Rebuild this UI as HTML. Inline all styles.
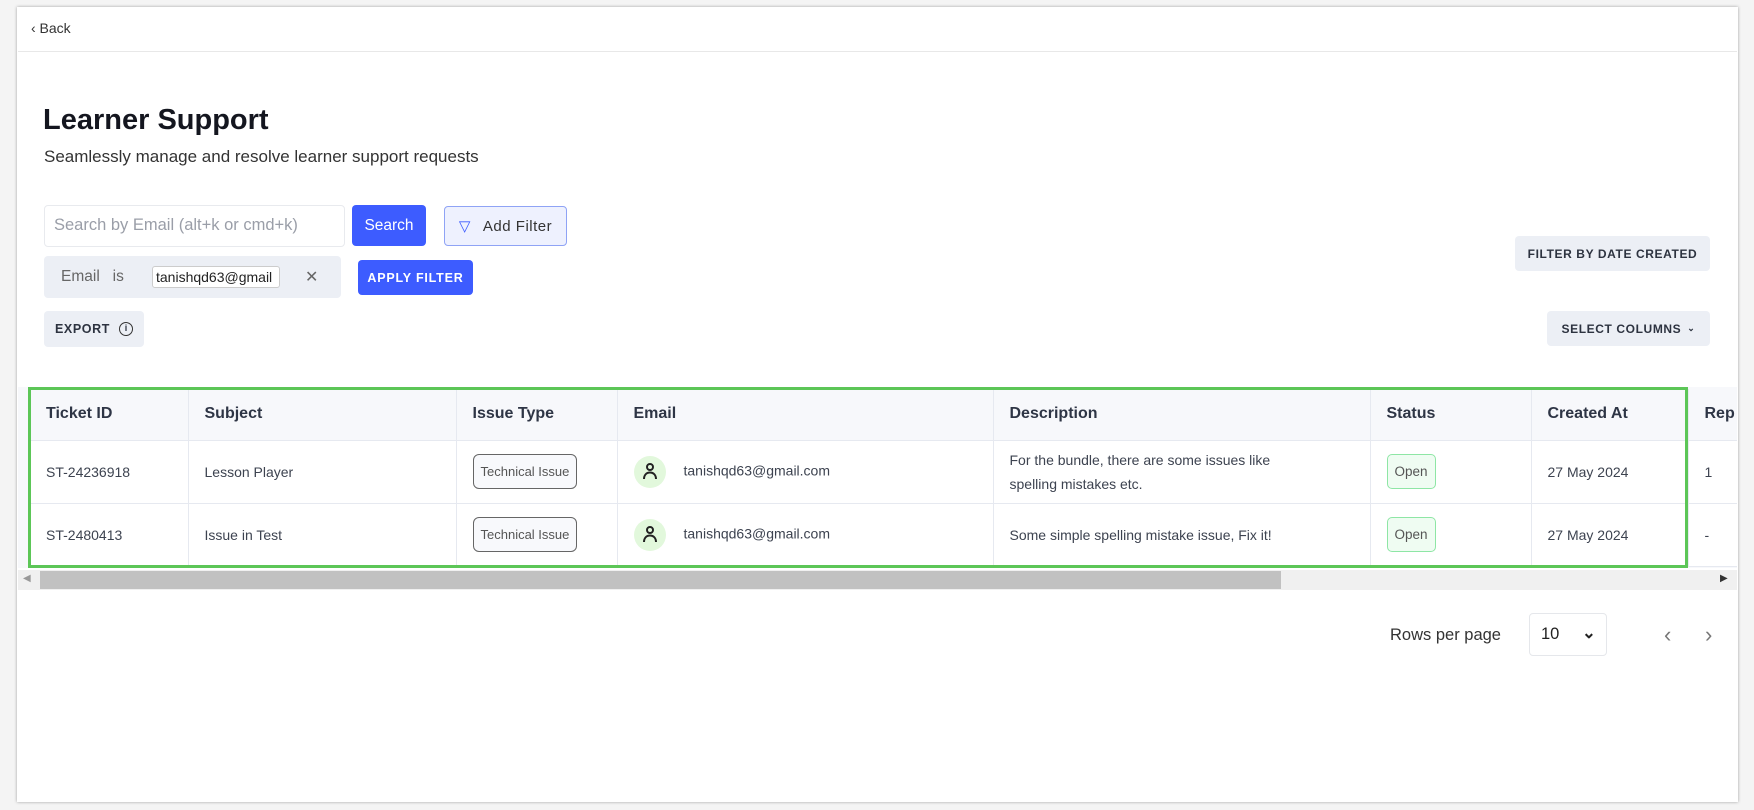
<!DOCTYPE html>
<html><head><meta charset="utf-8"><style>
*{box-sizing:border-box;margin:0;padding:0}
body{width:1754px;height:810px;background:#f4f4f4;font-family:"Liberation Sans",sans-serif;position:relative;overflow:hidden;color:#2b2f3a}
.frame{position:absolute;left:17px;top:7px;width:1721px;height:795px;background:#fff;box-shadow:0 0 3px rgba(0,0,0,.35)}
.a{position:absolute}
.btn{position:absolute;border-radius:4px;display:flex;align-items:center;justify-content:center}
.gray{background:#eceff5;color:#2d3340;font-weight:bold;font-size:12.5px;letter-spacing:.6px}
.clip{position:absolute;left:18px;top:387px;width:1719px;height:181px;overflow:hidden;background:#f7f8fb}
table{border-collapse:collapse;position:absolute;left:12px;top:2px;table-layout:fixed;width:1718px}
td,th{border-right:1px solid #e6e9f0;border-bottom:1px solid #e6e9f0;text-align:left;padding:0 0 0 16px;font-size:14px;color:#3d4350;white-space:nowrap;overflow:hidden}
th{background:#f7f8fb;height:51px;font-size:16px;color:#2e3545;font-weight:bold}
td{height:63px;background:#fff}
.badge{display:inline-block;border:1.5px solid #666;border-radius:6px;padding:9px 7px;font-size:13px;color:#555;background:#f8f9fc}
.open{display:inline-block;border:1.5px solid #8ee6a5;border-radius:5px;padding:9px 7px;font-size:13.5px;color:#555;background:#effcf2}
.av{display:inline-block;width:32px;height:32px;border-radius:50%;background:#e2f8dc;vertical-align:middle;margin-right:18px;position:relative}
</style></head><body>
<div class="frame"></div>
<div class="a" style="left:31px;top:20px;font-size:14px;color:#333">&#8249;&nbsp;Back</div>
<div class="a" style="left:18px;top:51px;width:1719px;height:1px;background:#e8e8e8"></div>
<div class="a" style="left:43px;top:104px;font-size:29px;font-weight:bold;color:#14161f">Learner Support</div>
<div class="a" style="left:44px;top:147px;font-size:17px;color:#333">Seamlessly manage and resolve learner support requests</div>
<div class="a" style="left:44px;top:205px;width:301px;height:42px;border:1px solid #e8eaee;border-radius:4px;font-size:16.5px;color:#9a9ea8;padding:10px 0 0 9px">Search by Email (alt+k or cmd+k)</div>
<div class="btn" style="left:352px;top:205px;width:74px;height:41px;background:#3d5cff;color:#fff;font-size:15.5px">Search</div>
<div class="btn" style="left:444px;top:206px;width:123px;height:40px;background:#eef1fe;border:1.5px solid #8fa3f5;color:#333;font-size:15px;letter-spacing:.5px"><span style="color:#3d5cff;margin-right:12px">&#9661;</span>Add Filter</div>
<div class="a" style="left:44px;top:256px;width:297px;height:42px;background:#eceff5;border-radius:4px"></div>
<div class="a" style="left:61px;top:268px;font-size:15.5px;color:#666">Email&nbsp;&nbsp;&nbsp;is</div>
<div class="a" style="left:152px;top:266px;width:128px;height:22px;border:1px solid #ccc;border-radius:3px;background:#fff;font-size:14px;padding:2px 3px;overflow:hidden;color:#222">tanishqd63@gmail</div>
<div class="a" style="left:305px;top:267px;font-size:16px;color:#666">&#10005;</div>
<div class="btn" style="left:358px;top:260px;width:115px;height:35px;background:#3d5cff;color:#fff;font-size:12.5px;font-weight:bold;letter-spacing:.8px">APPLY FILTER</div>
<div class="btn gray" style="left:44px;top:311px;width:100px;height:36px">EXPORT <span style="display:inline-block;width:14px;height:14px;border:1.5px solid #333;border-radius:50%;font-size:9px;line-height:11px;text-align:center;margin-left:9px;letter-spacing:0">i</span></div>
<div class="btn gray" style="left:1515px;top:236px;width:195px;height:35px;font-size:12px">FILTER BY DATE CREATED</div>
<div class="btn gray" style="left:1547px;top:311px;width:163px;height:35px;font-size:12px">SELECT COLUMNS <span style="font-size:9px;margin-left:6px">&#8964;</span></div>
<div class="clip">
<table>
<colgroup><col style="width:158px"><col style="width:268px"><col style="width:161px"><col style="width:376px"><col style="width:377px"><col style="width:161px"><col style="width:157px"><col style="width:60px"></colgroup>
<tr><th>Ticket ID</th><th>Subject</th><th>Issue Type</th><th>Email</th><th>Description</th><th>Status</th><th>Created At</th><th>Rep</th></tr>
<tr><td>ST-24236918</td><td>Lesson Player</td><td><span class="badge">Technical Issue</span></td><td><span class="av"><svg width="32" height="32" viewBox="0 0 32 32" fill="none" stroke="#222" stroke-width="2"><circle cx="16" cy="11" r="3"/><path d="M10 23c0-4 2.5-6.5 6-6.5s6 2.5 6 6.5"/></svg></span>tanishqd63@gmail.com</td><td style="line-height:24px">For the bundle, there are some issues like<br>spelling mistakes etc.</td><td><span class="open">Open</span></td><td>27 May 2024</td><td>1</td></tr>
<tr><td>ST-2480413</td><td>Issue in Test</td><td><span class="badge">Technical Issue</span></td><td><span class="av"><svg width="32" height="32" viewBox="0 0 32 32" fill="none" stroke="#222" stroke-width="2"><circle cx="16" cy="11" r="3"/><path d="M10 23c0-4 2.5-6.5 6-6.5s6 2.5 6 6.5"/></svg></span>tanishqd63@gmail.com</td><td>Some simple spelling mistake issue, Fix it!</td><td><span class="open">Open</span></td><td>27 May 2024</td><td>-</td></tr>
</table>
</div>
<div class="a" style="left:28px;top:387px;width:1660px;height:181px;border:3.5px solid #5cc657"></div>
<div class="a" style="left:18px;top:570px;width:1719px;height:20px;background:#f0f0f0"></div>
<div class="a" style="left:40px;top:571px;width:1241px;height:18px;background:#c1c1c1"></div>
<div class="a" style="left:23px;top:573px;font-size:10px;color:#999">&#9664;</div>
<div class="a" style="left:1720px;top:573px;font-size:10px;color:#333">&#9654;</div>
<div class="a" style="left:1390px;top:626px;font-size:16.5px;color:#333">Rows per page</div>
<div class="a" style="left:1529px;top:613px;width:78px;height:43px;border:1px solid #e5e7eb;border-radius:4px;font-size:16.5px;padding:11px 0 0 11px;color:#222">10<span style="position:absolute;left:52px;top:9px;font-weight:bold">&#8964;</span></div>
<div class="a" style="left:1664px;top:622px;font-size:22px;color:#777">&#8249;</div>
<div class="a" style="left:1705px;top:622px;font-size:22px;color:#777">&#8250;</div>
</body></html>
